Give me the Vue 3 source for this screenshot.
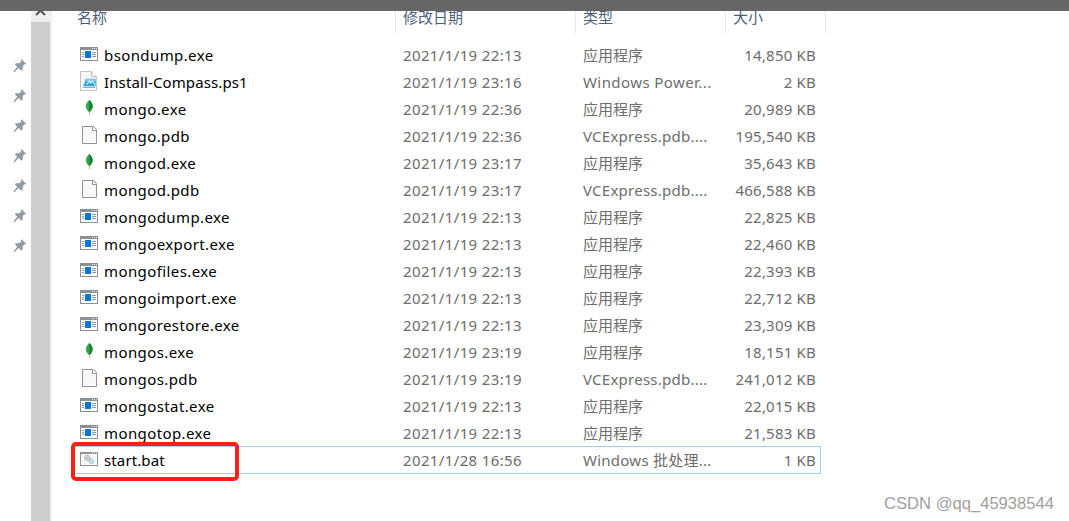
<script setup>
const columns = [
  { key: "name", label: "名称" },
  { key: "date", label: "修改日期" },
  { key: "type", label: "类型" },
  { key: "size", label: "大小" },
];

const files = [
  { name: "bsondump.exe", icon: "app", date: "2021/1/19 22:13", type: "应用程序", size: "14,850 KB" },
  { name: "Install-Compass.ps1", icon: "script", date: "2021/1/19 23:16", type: "Windows Power...", size: "2 KB" },
  { name: "mongo.exe", icon: "leaf", date: "2021/1/19 22:36", type: "应用程序", size: "20,989 KB" },
  { name: "mongo.pdb", icon: "file", date: "2021/1/19 22:36", type: "VCExpress.pdb....", size: "195,540 KB" },
  { name: "mongod.exe", icon: "leaf", date: "2021/1/19 23:17", type: "应用程序", size: "35,643 KB" },
  { name: "mongod.pdb", icon: "file", date: "2021/1/19 23:17", type: "VCExpress.pdb....", size: "466,588 KB" },
  { name: "mongodump.exe", icon: "app", date: "2021/1/19 22:13", type: "应用程序", size: "22,825 KB" },
  { name: "mongoexport.exe", icon: "app", date: "2021/1/19 22:13", type: "应用程序", size: "22,460 KB" },
  { name: "mongofiles.exe", icon: "app", date: "2021/1/19 22:13", type: "应用程序", size: "22,393 KB" },
  { name: "mongoimport.exe", icon: "app", date: "2021/1/19 22:13", type: "应用程序", size: "22,712 KB" },
  { name: "mongorestore.exe", icon: "app", date: "2021/1/19 22:13", type: "应用程序", size: "23,309 KB" },
  { name: "mongos.exe", icon: "leaf", date: "2021/1/19 23:19", type: "应用程序", size: "18,151 KB" },
  { name: "mongos.pdb", icon: "file", date: "2021/1/19 23:19", type: "VCExpress.pdb....", size: "241,012 KB" },
  { name: "mongostat.exe", icon: "app", date: "2021/1/19 22:13", type: "应用程序", size: "22,015 KB" },
  { name: "mongotop.exe", icon: "app", date: "2021/1/19 22:13", type: "应用程序", size: "21,583 KB" },
  { name: "start.bat", icon: "bat", date: "2021/1/28 16:56", type: "Windows 批处理...", size: "1 KB", selected: true },
];
</script>

<template>
  <div class="explorer">
    <div class="explorer__top" />
    <div class="explorer__body">
      <div class="explorer__nav">
        <svg
          v-for="n in 7"
          :key="n"
          class="explorer__pin"
          viewBox="0 0 14 14"
        >
          <path d="M8.6 0.2 L13.3 4.9 L12.2 5.6 L11.2 5.3 L9.8 7.4 L9.6 11 L8.5 11.7 L5.6 9.1 L1.4 13.2 L0.5 12.4 L4.2 7.8 L1.9 5.6 L2.9 4.3 L6.2 4.3 L8.3 2.5 L7.8 1.3 Z" />
        </svg>
      </div>
      <div class="explorer__scroll">
        <div class="explorer__scroll-up">
          <svg viewBox="0 0 19 11">
            <path d="M5 4 L9.5 -0.5 L14 4" />
          </svg>
        </div>
      </div>
      <div class="explorer__list">
        <div class="explorer__header">
          <div
            v-for="col in columns"
            :key="col.key"
            :class="['explorer__col', 'explorer__col-' + col.key]"
          >
            {{ col.label }}
          </div>
        </div>
        <div
          v-for="file in files"
          :key="file.name"
          :class="['file', 'file-' + file.icon, { 'file-selected': file.selected }]"
        >
          <svg
            class="file__icon"
            viewBox="0 0 20 20"
          >
            <g v-if="file.icon === 'app'">
              <rect x="0.5" y="2.5" width="17" height="13" fill="#fff" stroke="#8b9195" />
              <rect x="0" y="2" width="18" height="3" fill="#8b9195" />
              <path d="M12 3.5h1M14 3.5h1M16 3.5h1" stroke="#e8e8e8" />
              <path d="M2 7.5h2M2 9.5h2M2 11.5h2M12 7.5h4M12 9.5h4M12 11.5h4" stroke="#8f969a" />
              <rect x="5" y="6" width="6" height="7" fill="#0078d7" />
            </g>
            <g v-else-if="file.icon === 'script'">
              <path d="M0.5 -0.5h11l5 5v14h-16z" fill="#f8f8f8" stroke="#c3c3c3" />
              <path d="M11.5 0v4.5h5" fill="#fff" stroke="#bdbdbd" />
              <path d="M5.5 6.5h11.5l-1.5 8h-12.5z" fill="#35a3d8" stroke="#c9dfea" />
              <path d="M6 7h10.5l-0.5 2.5h-10.5z" fill="#75cbec" />
              <path d="M6.5 12.5l3-3.5 1 2 2-2 2 3.5" fill="none" stroke="#e2f7ff" stroke-width="1.1" />
              <path d="M3 15.5h12" stroke="#8daab9" />
            </g>
            <g v-else-if="file.icon === 'leaf'">
              <path d="M9.3 1 C13.2 4.3 14 8.6 9.9 13 L9.3 13.5 C4.7 9.4 4.9 4.6 9.3 1z" fill="#2fa84a" />
              <path d="M9.3 1 C13.2 4.3 14 8.6 9.9 13 L9.3 13.5z" fill="#178238" />
              <path d="M9.5 12.5v3.5" stroke="#b3b4ab" />
            </g>
            <g v-else-if="file.icon === 'file'">
              <path d="M2.5 0.5h11l3 3v14h-14z" fill="#f8f8f8" stroke="#939393" />
              <path d="M12.5 0.5v4h4" fill="#fff" stroke="#939393" />
            </g>
            <g v-else>
              <rect x="0.5" y="2.5" width="17" height="13" fill="#fafafa" stroke="#8b9195" />
              <rect x="0" y="2" width="18" height="2" fill="#8b9195" />
              <path d="M12 3h1M14 3h1M16 3h1" stroke="#fff" />
              <circle cx="7.2" cy="8" r="2.7" fill="#e3e5e6" stroke="#8c9296" stroke-dasharray="1.2 0.5" />
              <circle cx="7.2" cy="8" r="0.9" fill="#fff" stroke="#8c9296" stroke-width="0.7" />
              <circle cx="11.5" cy="11.3" r="2.4" fill="#d9effb" stroke="#7facc8" stroke-dasharray="1.2 0.5" />
              <circle cx="11.5" cy="11.3" r="0.7" fill="#fff" stroke="#7facc8" stroke-width="0.6" />
            </g>
          </svg>
          <div class="file__name">{{ file.name }}</div>
          <div class="file__date">{{ file.date }}</div>
          <div class="file__type">{{ file.type }}</div>
          <div class="file__size">{{ file.size }}</div>
        </div>
      </div>
    </div>
    <div class="explorer__mark" />
    <div class="explorer__watermark">CSDN @qq_45938544</div>
  </div>
</template>

<style>
body {
  margin: 0;
  overflow: hidden;
}
</style>

<style scoped>
.explorer {
  position: relative;
  width: 1069px;
  height: 521px;
  overflow: hidden;
  background-color: #fff;
  font-family: "Noto Sans", "Noto Sans CJK SC", sans-serif;
  font-size: 15px;
  color: #6d6d6d;
}

.explorer__top {
  height: 11px;
  background-color: #666;
}

.explorer__body {
  display: flex;
  height: 510px;
}

.explorer__nav {
  display: flex;
  flex-direction: column;
  gap: 16px;
  box-sizing: border-box;
  width: 31px;
  padding: 48px 0 0 13px;
}

.explorer__pin {
  width: 14px;
  height: 14px;
  fill: #909ba3;
}

.explorer__scroll {
  box-sizing: border-box;
  width: 20px;
  background-color: #cdcdcd;
  border-right: 1px solid #f0f0f0;
}

.explorer__scroll-up {
  height: 11px;
  background-color: #f0f0f0;
}

.explorer__scroll-up svg {
  display: block;
  width: 19px;
  height: 11px;
  fill: none;
  stroke: #505050;
  stroke-width: 2;
}

.explorer__list {
  width: 774px;
  padding-left: 19px;
  border-left: 2px solid #f7f7f7;
}

.explorer__header {
  display: flex;
  height: 22px;
  margin-bottom: 9px;
  line-height: 13px;
  color: #4c607a;
}

.explorer__col {
  box-sizing: border-box;
  padding-left: 7px;
  border-right: 1px solid #e5e5e5;
}

.explorer__col-name {
  width: 324px;
  padding-left: 5px;
}

.explorer__col-date {
  width: 180px;
}

.explorer__col-type {
  width: 150px;
}

.explorer__col-size {
  width: 100px;
}

.file {
  display: grid;
  grid-template-columns: 24px 299px 180px 147px 86px;
  align-items: start;
  box-sizing: border-box;
  width: 749px;
  height: 27px;
  padding-left: 8px;
  line-height: 26px;
  white-space: nowrap;
}

.file-selected {
  height: 28px;
  margin-top: -1px;
  padding-left: 7px;
  border: 1px solid #99d1ff;
}

.file__icon {
  width: 20px;
  height: 20px;
  margin-top: 3px;
  overflow: visible;
}

.file__name {
  color: #000;
  letter-spacing: 0.4px;
}

.file-script .file__name,
.file-bat .file__name {
  letter-spacing: 0.12px;
}

.file__date {
  letter-spacing: 0.37px;
}

.file-script .file__type {
  letter-spacing: 0.42px;
}

.file-file .file__type,
.file-bat .file__type {
  letter-spacing: 0.25px;
}

.file__size {
  text-align: right;
  letter-spacing: 0.2px;
}

.explorer__mark {
  position: absolute;
  top: 442px;
  left: 71px;
  box-sizing: border-box;
  width: 168px;
  height: 39px;
  border: 4px solid #fb2016;
  border-radius: 5px;
}

.explorer__watermark {
  position: absolute;
  top: 494px;
  right: 15px;
  font-family: "Liberation Sans", sans-serif;
  font-size: 16.6px;
  line-height: 20px;
  color: #a0a0a0;
}
</style>
